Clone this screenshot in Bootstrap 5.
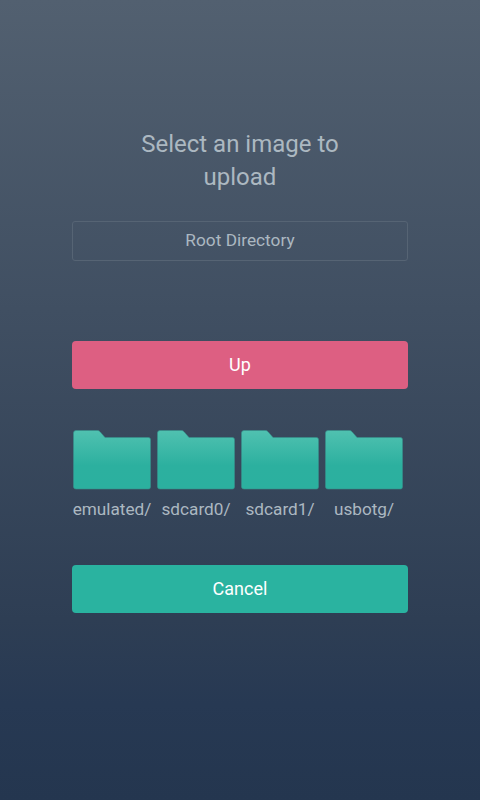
<!DOCTYPE html>
<html lang="en">
<head>
<meta charset="utf-8">
<title>Select an image</title>
<link href="https://cdn.jsdelivr.net/npm/bootstrap@5.3.0/dist/css/bootstrap.min.css" rel="stylesheet">
<style>
html,body{height:100%}
body{background:linear-gradient(180deg,#526070 0%,#2e3e54 77.5%,#273953 88%,#24364f 100%) no-repeat;background-size:100% 800px;font-family:Roboto,"Liberation Sans",sans-serif;overflow:hidden}
.shell{width:336px;margin:0 auto;padding-top:128px}
.headline{color:#acb8c1;font-size:24px;line-height:33px;font-weight:400;text-align:center;margin:0 0 27px;padding:0 50px}
.pathbox{height:40px;border:1px solid #566474;border-radius:3px;color:#acb8c1;font-size:17.3px;margin-bottom:80px}
.act{height:48px;border:0;border-radius:4px;color:#fff;font-size:18px;width:100%;padding:0 0 2px;--bs-btn-color:#fff;--bs-btn-hover-color:#fff}
.act-up{background:#dd5f82}
.act-up:hover{background:#dd5f82}
.act-cancel{background:#2ab3a0}
.act-cancel:hover{background:#2ab3a0}
.foldergrid{margin:41px 0 46px}
.foldercell{width:84px;padding-right:4px;text-align:center;color:#acb8c1;font-size:17.2px;line-height:20px}
.foldercell svg{display:block;width:78px;height:60px;margin:0 auto 9px}
</style>
</head>
<body>
<svg width="0" height="0" class="position-absolute">
<defs>
<linearGradient id="fg" x1="0" y1="0" x2="0" y2="1">
<stop offset="0" stop-color="#50c1b0"/>
<stop offset=".6" stop-color="#2cb09f"/>
<stop offset="1" stop-color="#2bb09f"/>
</linearGradient>
<symbol id="fold" viewBox="0 0 78 60">
<path d="M3 .5H24.500q1.500 0 2.500 1.200L32 7.500H75.500q2 0 2 2V57q0 2-2 2H3q-2.500 0-2.500-2V3Q.5.5 3 .5Z" fill="url(#fg)" stroke="#36908c" stroke-width=".6"/>
</symbol>
</defs>
</svg>
<main class="shell">
<h1 class="headline">Select an image to upload</h1>
<div class="pathbox d-flex align-items-center justify-content-center">Root Directory</div>
<button type="button" class="btn act act-up d-block">Up</button>
<div class="foldergrid d-flex">
<div class="foldercell"><svg><use href="#fold"/></svg>emulated/</div>
<div class="foldercell"><svg><use href="#fold"/></svg>sdcard0/</div>
<div class="foldercell"><svg><use href="#fold"/></svg>sdcard1/</div>
<div class="foldercell"><svg><use href="#fold"/></svg>usbotg/</div>
</div>
<button type="button" class="btn act act-cancel d-block">Cancel</button>
</main>
<script src="https://cdn.jsdelivr.net/npm/bootstrap@5.3.0/dist/js/bootstrap.bundle.min.js"></script>
</body>
</html>
